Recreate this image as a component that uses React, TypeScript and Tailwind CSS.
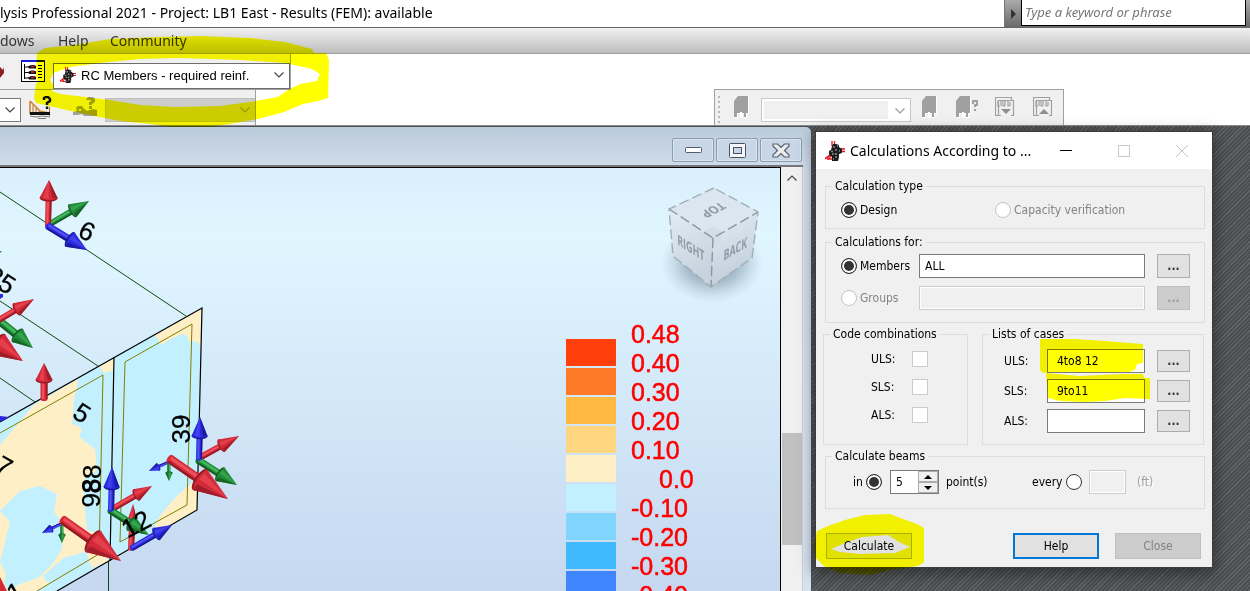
import type { ReactNode } from "react";

const SANS = "font-['Noto_Sans','Open_Sans',sans-serif]";
const TAHOMA = "font-['DejaVu_Sans_Condensed','DejaVu_Sans',sans-serif]";

type Tone = { base: string; light: string; dark: string };

const RED: Tone = { base: "#d42a38", light: "#f0505c", dark: "#941a24" };
const GREEN: Tone = { base: "#1f8a38", light: "#43b85c", dark: "#145a22" };
const BLUE: Tone = { base: "#2a2adf", light: "#5353f2", dark: "#171792" };

type ArrowProps = {
  from: [number, number];
  to: [number, number];
  head: number;
  spread: number;
  shaft: number;
  tone: Tone;
};

function Arrow({ from, to, head, spread, shaft, tone }: ArrowProps) {
  const dx = to[0] - from[0];
  const dy = to[1] - from[1];
  const len = Math.hypot(dx, dy);
  const angle = (Math.atan2(dy, dx) * 180) / Math.PI;
  const neck = len - head;
  const half = spread / 2;
  const s = shaft / 2;
  return (
    <g transform={`translate(${from[0]} ${from[1]}) rotate(${angle})`}>
      <ellipse cx={0} cy={0} rx={s * 0.6} ry={s} fill={tone.base} />
      <rect x={0} y={-s} width={neck + 2} height={shaft} fill={tone.base} />
      <rect x={0} y={-s * 0.6} width={neck + 2} height={s * 0.7} fill={tone.light} />
      <rect x={0} y={s * 0.5} width={neck + 2} height={s * 0.5} fill={tone.dark} />
      <ellipse cx={neck} cy={0} rx={spread / 5} ry={half} fill={tone.dark} />
      <path d={`M${neck} ${-half} L${len} 0 L${neck} ${half} Q${neck - spread / 4} 0 ${neck} ${-half}Z`} fill={tone.base} />
      <path d={`M${neck} ${-half * 0.6} L${len} 0 L${neck - 1} 0Z`} fill={tone.light} opacity={0.55} />
      <path d={`M${neck} ${half * 0.45} L${len} 0 L${neck} ${half}Z`} fill={tone.dark} opacity={0.8} />
    </g>
  );
}

function Model() {
  return (
    <svg className="absolute left-0 top-0" width="260" height="423" viewBox="0 168 260 423" aria-hidden="true">
      <polygon points="0,422 202,308 200,390 197,510 0,622" fill="#c3f0ff" />
      <g fill="#ffefc6">
        <path d="M202 308 L155 335 L159 341 L162 345 L170 339 L182 334 L188 336 L188 341 L198 342 L201 347Z" />
        <path d="M114 358 L100 366 L102 371 L106 373 L113 370Z" />
        <path d="M192 483 L197 490 V510 L152 535 L157 520 L167 507 L180 493Z" />
        <path d="M78 379 L35 404 L0 445 V591 H36 L57 579 L43 576 L53 567 L64 558 L86 552 L91 568 L109 561 L99 550 L100 534 L87 530 L84 500 V480 L97 470 L95 449 L79 437 L82 428 L72 424 L74 400Z" />
      </g>
      <path d="M0 511 L20 491 L40 486 L57 494 L54 512 L62 522 L62 549 L53 563 L40 577 L20 584 L8 591 L4 583 L6 573 L0 562 L10 522Z" fill="#c3f0ff" />
      <path d="M43 578 L53 567 L64 558 L86 552 L92 569 L57 590Z" fill="#c3f0ff" />
      <g fill="none" stroke="#0a4a12" strokeWidth="1">
        <path d="M0 192 L186 316" />
        <path d="M0 301 L98 366" />
        <path d="M0 378 L35 402" />
        <path d="M108.5 561 V591" />
      </g>
      <g fill="none" stroke="#808000" strokeWidth="1">
        <path d="M125 362 L192 324 L187 505 L120 542Z" />
        <path d="M0 433 L103 375 L99 554 L37 591" />
      </g>
      <g fill="none" stroke="#000" strokeWidth="1.2">
        <path d="M0 422 L202 308 L200 390 L197 510 L57 591" />
        <path d="M114 357 L110 561" />
      </g>

      <Arrow from={[48, 225]} to={[89, 201]} head={19} spread={15} shaft={6} tone={GREEN} />
      <Arrow from={[48, 226]} to={[49, 180]} head={18} spread={18} shaft={6} tone={RED} />
      <Arrow from={[48, 226]} to={[87, 250]} head={20} spread={17} shaft={7} tone={BLUE} />

      <Arrow from={[-8, 315]} to={[33, 348]} head={20} spread={17} shaft={8} tone={GREEN} />
      <Arrow from={[-8, 324]} to={[34, 299]} head={20} spread={14} shaft={6} tone={RED} />
      <Arrow from={[-30, 326]} to={[23, 361]} head={30} spread={25} shaft={10} tone={RED} />
      <path d="M0 294 H3 V297 L0 299Z" fill={BLUE.base} />
      <path d="M0 251 L2 251 L0 253Z" fill={GREEN.base} />
      <Arrow from={[44, 399]} to={[44, 363]} head={17} spread={17} shaft={7} tone={RED} />
      <path d="M0 416 L9 417 L0 422Z" fill={BLUE.base} />
      <path d="M0 577 L7 591 H0Z" fill={RED.base} />

      <Arrow from={[169, 462]} to={[149, 471]} head={10} spread={8} shaft={3} tone={BLUE} />
      <Arrow from={[169, 463]} to={[169, 481]} head={8} spread={7} shaft={3} tone={GREEN} />
      <Arrow from={[199, 458]} to={[239, 436]} head={20} spread={14} shaft={6} tone={RED} />
      <Arrow from={[198, 460]} to={[237, 485]} head={20} spread={16} shaft={7} tone={GREEN} />
      <Arrow from={[199, 459]} to={[200, 417]} head={19} spread={16} shaft={6} tone={BLUE} />
      <Arrow from={[170, 459]} to={[228, 499]} head={34} spread={25} shaft={9} tone={RED} />

      <Arrow from={[61, 524]} to={[42, 533]} head={10} spread={8} shaft={3} tone={BLUE} />
      <Arrow from={[62, 525]} to={[62, 543]} head={8} spread={7} shaft={3} tone={GREEN} />
      <Arrow from={[112, 509]} to={[152, 486]} head={18} spread={13} shaft={6} tone={RED} />
      <Arrow from={[131, 549]} to={[133, 504]} head={17} spread={10} shaft={6} tone={RED} />
      <Arrow from={[110, 510]} to={[149, 535]} head={21} spread={16} shaft={7} tone={GREEN} />
      <Arrow from={[111, 510]} to={[112, 467]} head={20} spread={16} shaft={6} tone={BLUE} />
      <Arrow from={[132, 548]} to={[172, 525]} head={18} spread={14} shaft={6} tone={BLUE} />
      <Arrow from={[63, 520]} to={[121, 561]} head={34} spread={26} shaft={9} tone={RED} />

      <g className="font-['Liberation_Sans',Arial,sans-serif] text-[26px]" textAnchor="middle" fill="#000" stroke="#000" strokeWidth="0.3">
        <text transform="translate(87 231) rotate(26)" y="9">6</text>
        <text transform="translate(1 280) rotate(33)" y="9">35</text>
        <text transform="translate(82 413) rotate(33)" y="9">5</text>
        <text transform="translate(4 466) rotate(30)" y="9">7</text>
        <text transform="translate(15 592) rotate(-30)" y="9">1</text>
        <text transform="translate(181 429) rotate(-90)" y="9">39</text>
        <text transform="translate(92 479) rotate(-90)" y="9">88</text>
        <text transform="translate(91 493) rotate(-90)" y="9">98</text>
        <text transform="translate(136 524) rotate(-28)" y="9">12</text>
      </g>
    </svg>
  );
}

function ViewCube() {
  return (
    <svg className="absolute right-2 top-3" width="116" height="128" viewBox="656 180 116 128" aria-hidden="true">
      <defs>
        <radialGradient id="cubeShadow">
          <stop offset="0" stopColor="#5f7080" stopOpacity="0.9" />
          <stop offset="0.55" stopColor="#7f93a5" stopOpacity="0.5" />
          <stop offset="1" stopColor="#a9bccb" stopOpacity="0" />
        </radialGradient>
        <linearGradient id="cubeLeft" x1="0" y1="0" x2="0.4" y2="1">
          <stop offset="0" stopColor="#e2ecf4" />
          <stop offset="1" stopColor="#c6d2dd" />
        </linearGradient>
        <linearGradient id="cubeRight" x1="0.3" y1="0" x2="0.6" y2="1">
          <stop offset="0" stopColor="#e0eaf3" />
          <stop offset="1" stopColor="#bdcbd7" />
        </linearGradient>
      </defs>
      <ellipse cx="712" cy="263" rx="52" ry="40" fill="url(#cubeShadow)" />
      <polygon points="714,188 669,209 713,238 758,212" fill="#dbe6f0" />
      <polygon points="669,209 713,238 711,287 673,256" fill="url(#cubeLeft)" />
      <polygon points="713,238 758,212 752,258 711,287" fill="url(#cubeRight)" />
      <polygon points="704,231 713,226 721,230 721,240 713,246 704,240" fill="#cfdbe5" opacity="0.7" />
      <g fill="none" stroke="#8b979f" strokeWidth="1.4" strokeDasharray="10 4">
        <path d="M669 209 L713 238 L758 212" />
        <path d="M713 238 L711 287" />
        <path d="M714 188 L669 209 L673 256 L711 287 L752 258 L758 212Z" stroke="#a3aeb6" />
      </g>
      <g className="font-['Open_Sans',sans-serif] text-[12px] font-bold" fill="#8f9ba5" textAnchor="middle">
        <text transform="matrix(0.74 0.46 0.04 1.2 691 253)">RIGHT</text>
        <text transform="matrix(0.74 -0.44 -0.06 1.2 735 254)">BACK</text>
        <text transform="matrix(-0.85 0.44 -0.78 -0.7 710 207)">TOP</text>
      </g>
    </svg>
  );
}

const LEGEND_COLORS = [
  "bg-[#ff400d]",
  "bg-[#ff7a26]",
  "bg-[#ffb940]",
  "bg-[#ffd680]",
  "bg-[#ffefc6]",
  "bg-[#c3f0ff]",
  "bg-[#80d6ff]",
  "bg-[#40b9ff]",
  "bg-[#4086ff]",
];
const LEGEND_VALUES = ["0.48", "0.40", "0.30", "0.20", "0.10", "0.0", "-0.10", "-0.20", "-0.30", "-0.40"];

function Legend() {
  return (
    <div className="absolute right-[82px] top-[152px] flex w-[132px] gap-[15px]">
      <div className="mt-[19px] flex w-[50px] flex-col gap-[2px]">
        {LEGEND_COLORS.map((c) => (
          <div key={c} className={`h-[27px] ${c}`} />
        ))}
      </div>
      <ul className="font-['Liberation_Sans',Arial,sans-serif] text-[25px] leading-[29px] text-[#ff0000] [-webkit-text-stroke:0.5px_#ff0000]">
        {LEGEND_VALUES.map((v) => (
          <li key={v} className={v === "0.0" ? "pl-7" : ""}>
            {v}
          </li>
        ))}
      </ul>
    </div>
  );
}

function Chevron({ className }: { className?: string }) {
  return (
    <svg className={className} width="10" height="6" viewBox="0 0 10 6" fill="none" stroke="currentColor" strokeWidth="1.2" aria-hidden="true">
      <path d="M0.5 0.5 L5 5 L9.5 0.5" />
    </svg>
  );
}

function RebarIcon({ className }: { className?: string }) {
  return (
    <svg className={className} viewBox="0 0 20 20" aria-hidden="true">
      <path d="M7 0 V5 M9.500 0 V4 M14 8 H20 M14 10.500 H20 M0 18 L6 13 M2 18 H7" stroke="#e8141c" strokeWidth="1.300" />
      <path d="M7 5 L8 3 H11 L14 4 V6 L17 8 V12 L14 13 V16 L13 20 H7 V16 L5 15 L4 13 V10 L6 9Z" fill="#1c1c1c" />
      <path d="M8 6 H10 M12 5 H13 M6 10.500 H8 M10 9 H12 M14 10 H15 M7 13 H9 M11 12 V14 M10 16 H12 M8 18 H9" stroke="#8a8a8a" strokeWidth="1.700" />
      <path d="M0 17.500 L4 15 M3 18 L6 15" stroke="#e8141c" strokeWidth="1.300" />
    </svg>
  );
}

function TreeIcon() {
  return (
    <svg width="24" height="22" viewBox="0 0 24 22" aria-hidden="true">
      <rect x="0.500" y="0.500" width="23" height="21" fill="#fff" stroke="#000" />
      <rect x="0" y="0" width="24" height="2" fill="#1420d8" />
      <path d="M3.500 4 V19 M3 7 H8 M3 12.500 H8 M3 18 H8" stroke="#000" fill="none" />
      <path d="M7 6.500 L10 5 H13 L15 6 V8.500 H8Z M7 12 L10 10.500 H13 L15 11.500 V14 H8Z M7 17.500 L10 16 H13 L15 17 V19.500 H8Z" fill="#111" />
      <path d="M10 6.500 H13 M10 12 H13 M10 17.500 H13" stroke="#e0202a" strokeWidth="1.500" />
      <path d="M17 5.500 H21 M17 8.500 H21 M17 11.500 H21 M17 14.500 H21 M17 17.500 H21" stroke="#000" />
    </svg>
  );
}

function BridgeIcon() {
  return (
    <svg width="24" height="23" viewBox="0 0 24 23" aria-hidden="true">
      <path d="M2 5 V18 M2 5 L12 15 L21 17" fill="none" stroke="#d08a3c" strokeWidth="1.700" />
      <path d="M5 9 V17 M8 12 V17 M11 15 V17 M21.500 11 V20" stroke="#b06a2a" />
      <path d="M2 17.500 H22" stroke="#111" strokeWidth="3" />
      <path d="M2 20 L8 21 L14 20 L22 21 M10 22.500 H18" fill="none" stroke="#777" strokeWidth="1" />
      <path d="M16 4 V2 L18 1 H20 L22 3 V5 L19 7 V9 M19 10.500 V13" fill="none" stroke="#111" strokeWidth="2.400" />
    </svg>
  );
}

function GrayQueryIcon() {
  return (
    <svg width="24" height="23" viewBox="0 0 24 23" fill="#a0a0a0" aria-hidden="true">
      <path fillRule="evenodd" d="M0 19 V16 L4 15 L3 12 L5 10 H9 L11 13 L14 15 L20 13 L24 14 V20 H11 L9 18 L5 19Z M6 13 H8 V15 H6Z" />
      <path d="M13 4 L15 1 H20 L22 3 V6 L19 8 V9 H16 V6 L18 5 V4Z M16 10 H19 V13 H16Z" />
    </svg>
  );
}

function BlockIcon({ query = false }: { query?: boolean }) {
  return (
    <svg width={query ? 24 : 15} height="23" viewBox={query ? "0 0 24 23" : "0 0 15 23"} aria-hidden="true">
      <path d="M5 1 H15 V18 H13 V22 H10 V18 H9 V22 H6 V18 H4 V22 H1 V6Z" fill="#fff" />
      <path d="M4 0 H14 V17 H12 V21 H10 V17 H8 V16 H6 V17 H3 V21 H0 V5Z" fill="#a0a0a0" />
      {query && <path d="M17 8 V5 H21 V9 H19 V11 M19 13 V15" fill="none" stroke="#a0a0a0" strokeWidth="2" />}
    </svg>
  );
}

function ListIcon({ up = false }: { up?: boolean }) {
  return (
    <svg width="20" height="20" viewBox="0 0 20 20" aria-hidden="true">
      <path d="M4 18.500 H0.500 V0.500 H16.500 V3 M3.500 19 V3.500 H18.500 V18.500 H16 M3 18.500 H6" fill="none" stroke="#a0a0a0" strokeWidth="1.200" />
      <path d="M3 4 V9 H5 M6 4 V9 M8 4 V9 H10 M10 4 V9 M13 4 V9 H15 M15 5 V9" fill="none" stroke="#a0a0a0" strokeWidth="1.200" />
      <path d={up ? "M6 17 L11 12 L16 17Z" : "M6 12 H16 L11 17Z"} fill="#8e8e8e" />
    </svg>
  );
}

function Toolbars() {
  return (
    <div className="relative flex h-[71px] items-start justify-between bg-white">
      <div className="w-[291px] shrink-0">
        <div className="flex h-9 items-start border-b border-r border-[#a0a0a0] bg-[#f0f0f0] pt-[6px]">
          <svg className="mt-[5px] w-[21px] shrink-0" height="14" viewBox="0 0 21 14" aria-hidden="true">
            <path d="M0 2 L3 5 L4 2 V8 L0 13Z" fill="#8c1f24" />
          </svg>
          <button type="button" aria-label="Member tree" className="shrink-0">
            <TreeIcon />
          </button>
          <div className="relative ml-[8px] mt-[2px] h-[26px] flex-1">
            <select
              aria-label="Layout"
              className="h-full w-full appearance-none border border-[#6e6e6e] bg-white pl-[27px] font-['Liberation_Sans',Arial,sans-serif] text-[13px] text-black outline-none"
            >
              <option>RC Members - required reinf.</option>
            </select>
            <RebarIcon className="pointer-events-none absolute left-[7px] top-[5px] size-4" />
            <Chevron className="pointer-events-none absolute right-[6px] top-[10px] text-[#444]" />
          </div>
        </div>
        <div className="flex h-[35px] w-[256px] items-start border-r border-[#a0a0a0] bg-[#f0f0f0] pt-[6px]">
          <div className="relative mt-[2px] h-6 w-[21px] shrink-0">
            <select aria-label="Case" className="h-full w-full appearance-none border border-l-0 border-[#7a7a7a] bg-white outline-none">
              <option></option>
            </select>
            <Chevron className="pointer-events-none absolute left-[5px] top-[9px] text-[#444]" />
          </div>
          <button type="button" aria-label="Diagram help" className="ml-[7px] shrink-0">
            <BridgeIcon />
          </button>
          <button type="button" aria-label="Member help" className="ml-[21px] shrink-0">
            <GrayQueryIcon />
          </button>
          <div className="relative ml-[8px] mt-[2px] h-6 flex-1">
            <select disabled aria-label="Filter" className="h-full w-full appearance-none border border-r-0 border-[#bfbfbf] bg-[#cccccc] opacity-100 outline-none">
              <option></option>
            </select>
            <Chevron className="pointer-events-none absolute right-[5px] top-[9px] text-[#9a9a9a]" />
          </div>
        </div>
      </div>

      <div className="mr-[186px] mt-[35px] flex h-9 w-[350px] items-start border border-b-0 border-[#a0a0a0] bg-[#f0f0f0] pt-[6px]">
        <div className="ml-[3px] h-7 w-[2px] bg-[repeating-linear-gradient(#b8b8b8_0_2px,transparent_2px_5px)]" />
        <button type="button" aria-label="Block" className="ml-[14px]">
          <BlockIcon />
        </button>
        <div className="relative ml-[12px] mt-[2px] h-6 w-[150px] border border-[#c8c8c8] bg-white p-[2px]">
          <select disabled aria-label="Block list" className="block h-full w-[124px] appearance-none bg-[#f0f0f0] opacity-100">
            <option></option>
          </select>
          <Chevron className="pointer-events-none absolute right-[5px] top-[9px] text-[#9a9a9a]" />
        </div>
        <button type="button" aria-label="Block view" className="ml-[11px]">
          <BlockIcon />
        </button>
        <button type="button" aria-label="Block query" className="ml-[19px]">
          <BlockIcon query />
        </button>
        <button type="button" aria-label="Export" className="ml-[15px] mt-px">
          <ListIcon />
        </button>
        <button type="button" aria-label="Import" className="ml-[18px] mt-px">
          <ListIcon up />
        </button>
      </div>

      <svg className="pointer-events-none absolute -top-[19px] left-[30px] z-10 mix-blend-multiply" width="305" height="92" viewBox="30 35 305 92" aria-hidden="true">
        <path
          fillRule="evenodd"
          fill="#ffff00"
          d="M37 53 L45 48 L75 45 L110 39 L160 37 L200 36 L250 38 L285 42 L312 49 L314 53 L326 53 L329 60 L328 98 L318 101 L303 104 L284 112 L258 119 L230 124 L210 127 L170 127 L150 124 L120 121 L80 113 L36 103 L34 98 L36 84 L38 82 L36 76Z
             M53 73 L70 67 L100 63 L140 59 L180 58 L240 60 L285 63 L312 69 L320 74 L317 81 L300 84 L288 90 L278 97 L250 102 L220 106 L175 107 L140 105 L110 100 L85 97 L60 94 L52 91 L54 86 L50 80Z"
        />
      </svg>
    </div>
  );
}

function ViewWindow() {
  const control = "flex h-6 w-[42px] items-center justify-center rounded-[2px] border border-[#8a9db3] bg-[#c8d6e6] shadow-[inset_0_0_0_1px_#dbe5f0]";
  return (
    <section className="flex min-w-0 flex-1 flex-col rounded-tr-md border-r border-t border-[#4b5057] bg-linear-to-b from-[#bccbdb] via-[#d3dfec] via-10% to-[#d5e3f1] pr-2">
      <div className="flex h-[38px] shrink-0 items-center justify-end gap-[2px] pr-px pt-2">
        <button type="button" aria-label="Minimize view" className={control}>
          <svg width="17" height="6" viewBox="0 0 17 6" aria-hidden="true">
            <rect x="0.500" y="0.500" width="16" height="5" rx="1" fill="#fff" stroke="#555b70" />
          </svg>
        </button>
        <button type="button" aria-label="Maximize view" className={control}>
          <svg width="17" height="15" viewBox="0 0 17 15" aria-hidden="true">
            <rect x="0.500" y="0.500" width="16" height="14" rx="1" fill="#f4f6fa" stroke="#4a5066" />
            <rect x="4.500" y="4.500" width="8" height="6" fill="#c8d6e6" stroke="#4a5066" />
          </svg>
        </button>
        <button type="button" aria-label="Close view" className={control}>
          <svg width="18" height="15" viewBox="0 0 18 15" aria-hidden="true">
            <path d="M1 1 H5.500 L9 4.500 L12.500 1 H17 V3 L12.500 7.500 L17 12 V14 H12.500 L9 10.500 L5.500 14 H1 V12 L5.500 7.500 L1 3Z" fill="#ececec" stroke="#5a6074" strokeWidth="1.200" />
          </svg>
        </button>
      </div>
      <div className="flex min-h-0 flex-1 border-t-2 border-[#777]">
        <div className="relative min-w-0 flex-1 overflow-hidden border-r border-t border-black bg-linear-to-b from-[#d9f0fc] via-[#e0f6ff] via-16% to-[#c5d8f0]">
          <Model />
          <ViewCube />
          <Legend />
        </div>
        <div className="flex w-[22px] flex-col items-center border-r border-[#d0d0d0] bg-[#f0f0f0]">
          <Chevron className="mt-2 rotate-180 text-[#444]" />
          <div className="mt-[252px] h-[112px] w-5 bg-[#c0c0c0]" />
        </div>
      </div>
    </section>
  );
}

function Group({ title, className, children }: { title: string; className: string; children: ReactNode }) {
  return (
    <fieldset className={`min-w-0 border border-[#dcdcdc] ${className}`}>
      <legend className="ml-[6px] h-4 px-[3px] leading-4">{title}</legend>
      {children}
    </fieldset>
  );
}

function Radio({ id, name, checked, disabled }: { id: string; name: string; checked?: boolean; disabled?: boolean }) {
  return (
    <input
      id={id}
      name={name}
      type="radio"
      defaultChecked={checked}
      disabled={disabled}
      className="m-0 size-4 shrink-0 appearance-none rounded-full border border-[#333] bg-white checked:bg-[#333] checked:shadow-[inset_0_0_0_2px_white] disabled:border-[#c4c4c4]"
    />
  );
}

function Browse({ label, disabled, className }: { label: string; disabled?: boolean; className?: string }) {
  return (
    <button
      type="button"
      aria-label={label}
      disabled={disabled}
      className={`w-[33px] shrink-0 border border-[#adadad] bg-[#e1e1e1] font-bold text-[#333] disabled:border-[#bfbfbf] disabled:bg-[#cccccc] disabled:text-[#9a9a9a] ${className ?? ""}`}
    >
      ...
    </button>
  );
}

const FIELD = "h-6 min-w-0 border border-[#7a7a7a] bg-white text-[12px] outline-none disabled:border-[#cccccc] disabled:bg-[#f0f0f0] disabled:shadow-[inset_0_0_0_1px_white]";

const CASES = [
  { id: "uls", label: "ULS:", value: "4to8 12" },
  { id: "sls", label: "SLS:", value: "9to11" },
  { id: "als", label: "ALS:", value: "" },
];

function CalculationDialog() {
  return (
    <section className={`relative mr-[37px] mt-[5px] w-[398px] shrink-0 self-start border border-[#3c3c3c] bg-[#f0f0f0] shadow-[0_4px_14px_2px_rgba(0,0,0,0.4)] ${TAHOMA} text-[12px] text-black`}>
      <header className="flex h-[37px] items-center bg-white pl-[9px]">
        <RebarIcon className="size-5 shrink-0" />
        <h2 className={`ml-[5px] flex-1 whitespace-nowrap ${SANS} text-[14px]`}>Calculations According to ...</h2>
        <div className="mr-6 flex items-center gap-[46px]">
          <button type="button" aria-label="Minimize" className="h-px w-3 bg-black" />
          <button type="button" aria-label="Maximize" className="size-3 border border-[#c8c8c8]" />
          <button type="button" aria-label="Close window">
            <svg width="12" height="12" viewBox="0 0 12 12" stroke="#c4c4c4" aria-hidden="true">
              <path d="M0 0 L12 12 M12 0 L0 12" />
            </svg>
          </button>
        </div>
      </header>

      <form className="pb-[8px] pl-[9px] pr-[7px] pt-[9px]" onSubmit={(e) => e.preventDefault()}>
        <Group title="Calculation type" className="h-[51px]">
          <div className="flex h-8 items-center pl-[15px]">
            <Radio id="design" name="type" checked />
            <label htmlFor="design" className="w-[138px] pl-[3px]">Design</label>
            <Radio id="capacity" name="type" disabled />
            <label htmlFor="capacity" className="pl-[3px] text-[#838383]">Capacity verification</label>
          </div>
        </Group>

        <Group title="Calculations for:" className="mt-[5px] h-[89px]">
          <div className="flex flex-col gap-2 pl-[15px] pr-[14px] pt-[4px]">
            <div className="flex items-center">
              <Radio id="members" name="scope" checked />
              <label htmlFor="members" className="w-[62px] pl-[3px]">Members</label>
              <input aria-label="Members list" defaultValue="ALL" className={`${FIELD} flex-1 px-[5px]`} />
              <Browse label="Browse members" className="ml-3 h-6" />
            </div>
            <div className="flex items-center">
              <Radio id="groups" name="scope" disabled />
              <label htmlFor="groups" className="w-[62px] pl-[3px] text-[#838383]">Groups</label>
              <input aria-label="Groups list" disabled className={`${FIELD} flex-1 px-[5px]`} />
              <Browse label="Browse groups" disabled className="ml-3 h-6" />
            </div>
          </div>
        </Group>

        <div className="-ml-[2px] mr-px mt-[3px] flex justify-between">
          <Group title="Code combinations" className="h-[119px] w-[145px]">
            <div className="flex flex-col gap-[10px] pl-[47px] pt-[8px]">
              {CASES.map((c) => (
                <div key={c.id} className="flex items-center">
                  <label htmlFor={`code-${c.id}`} className="w-[41px]">{c.label}</label>
                  <input id={`code-${c.id}`} type="checkbox" className="size-4 appearance-none border border-[#cccccc] bg-white" />
                </div>
              ))}
            </div>
          </Group>
          <Group title="Lists of cases" className="h-[119px] w-[222px]">
            <div className="flex flex-col gap-[6px] pl-[21px] pr-[13px] pt-[7px]">
              {CASES.map((c) => (
                <div key={c.id} className="flex items-center">
                  <label htmlFor={`list-${c.id}`} className="w-[43px]">{c.label}</label>
                  <input id={`list-${c.id}`} defaultValue={c.value} className={`${FIELD} flex-1 px-[9px]`} />
                  <Browse label={`Browse ${c.label}`} className="ml-3 h-[22px]" />
                </div>
              ))}
            </div>
          </Group>
        </div>

        <Group title="Calculate beams" className="mt-[3px] h-[61px]">
          <div className="flex h-9 items-center pl-[27px]">
            <label htmlFor="in-points" className="w-[13px]">in</label>
            <Radio id="in-points" name="beams" checked />
            <div className="ml-2 flex h-6 w-[49px] shrink-0 border border-[#7a7a7a] bg-white">
              <input aria-label="Points" defaultValue="5" className="w-[27px] min-w-0 pl-[5px] text-[12px] outline-none" />
              <div className="flex flex-1 flex-col">
                <button type="button" aria-label="More points" className="flex flex-1 items-center justify-center border border-[#adadad] bg-[#f0f0f0]">
                  <svg width="8" height="4" viewBox="0 0 8 4" aria-hidden="true"><path d="M0 4 L4 0 L8 4Z" /></svg>
                </button>
                <button type="button" aria-label="Fewer points" className="flex flex-1 items-center justify-center border border-[#adadad] bg-[#f0f0f0]">
                  <svg width="8" height="4" viewBox="0 0 8 4" aria-hidden="true"><path d="M0 0 L4 4 L8 0Z" /></svg>
                </button>
              </div>
            </div>
            <span className="ml-[7px] w-[86px]">point(s)</span>
            <label htmlFor="every" className="w-[34px]">every</label>
            <Radio id="every" name="beams" />
            <input aria-label="Spacing" disabled className={`${FIELD} ml-[7px] w-[37px]`} />
            <span className="ml-[11px] text-[#a0a0a0] [text-shadow:1px_1px_0_white]">(ft)</span>
          </div>
        </Group>

        <div className="mt-6 flex items-center pl-px pr-[4px]">
          <button type="button" className="h-[26px] w-[86px] border border-[#adadad] bg-[#e1e1e1]">Calculate</button>
          <button type="button" className="ml-auto h-[26px] w-[86px] border-2 border-[#0078d7] bg-[#e1e1e1]">Help</button>
          <button type="button" disabled className="ml-4 h-[26px] w-[86px] border border-[#bfbfbf] bg-[#cccccc] text-[#838383]">Close</button>
        </div>
      </form>

      <svg className="pointer-events-none absolute left-[223px] top-[206px] mix-blend-multiply" width="114" height="66" viewBox="1039 338 114 66" fill="#ffff00" aria-hidden="true">
        <path d="M1040 339 H1075 L1105 341 L1130 343 L1143 344 V363 L1137 364 L1135 370 L1128 372 H1050 L1043 373 L1040 370Z" />
        <path d="M1046 373 L1080 376 L1120 374 L1143 374 L1144 378 L1150 378 V399 L1125 398 L1105 401 L1085 402 L1060 401 L1048 398Z" />
      </svg>
      <svg className="pointer-events-none absolute -left-[3px] top-[380px] mix-blend-multiply" width="114" height="66" viewBox="813 512 114 66" aria-hidden="true">
        <path
          fillRule="evenodd"
          fill="#ffff00"
          d="M817 531 L828 526 L845 520 L865 515 L890 514 L903 519 L917 524 L924 528 V562 L918 566 L890 570 L870 575 L840 573 L825 567 L816 558 L814 545Z
             M831 549 L845 543 L862 537 L888 535 L899 542 L910 547 L895 553 L860 554 L840 552Z"
        />
      </svg>
    </section>
  );
}

export default function App() {
  return (
    <div className={`flex h-screen flex-col overflow-hidden bg-white ${SANS} text-black`}>
      <header className="flex h-7 shrink-0 justify-between border-b border-[#666]">
        <h1 className="whitespace-nowrap text-[14px] leading-[26px]">lysis Professional 2021 - Project: LB1 East - Results (FEM): available</h1>
        <div className="flex w-[246px] bg-linear-to-b from-[#ababab] to-[#6a6a6a]">
          <button type="button" aria-label="Expand search" className="flex w-[17px] items-center justify-center border-l border-[#777]">
            <svg width="5" height="10" viewBox="0 0 5 10" aria-hidden="true"><path d="M0 0 L5 5 L0 10Z" fill="#333" /></svg>
          </button>
          <input
            aria-label="Search"
            placeholder="Type a keyword or phrase"
            className="mb-px mr-[4px] min-w-0 flex-1 border border-t-0 border-black bg-white px-[3px] text-[13px] italic outline-none placeholder:text-[#777] placeholder:opacity-100"
          />
        </div>
      </header>
      <nav className="flex h-[26px] shrink-0 items-center border-b border-[#a0a0a0] bg-linear-to-b from-[#f2f2f2] to-[#bdbdbd] text-[14px] text-[#333]">
        <a href="#windows" className="w-[58px]">dows</a>
        <a href="#help" className="w-[52px]">Help</a>
        <a href="#community">Community</a>
      </nav>
      <Toolbars />
      <main className="flex min-h-0 flex-1 gap-[3px] border-t border-[#8a8a8a] bg-[#56585a] bg-[repeating-linear-gradient(135deg,#4c4e50_0_2px,#626466_2px_3px)]">
        <ViewWindow />
        <CalculationDialog />
      </main>
    </div>
  );
}
